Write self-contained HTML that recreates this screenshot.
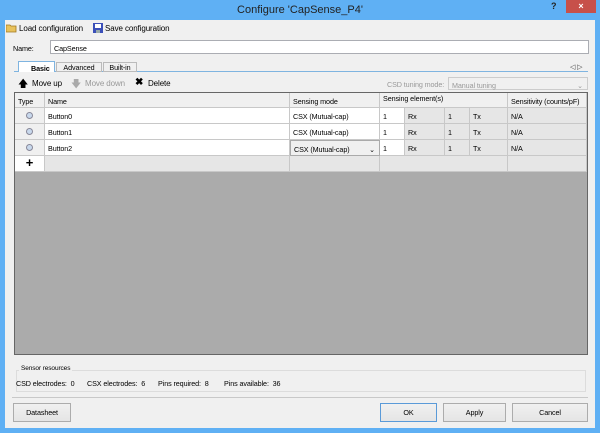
<!DOCTYPE html>
<html><head><style>
*{box-sizing:border-box;margin:0;padding:0}
body{width:600px;height:433px;background:#5fb0f4;font-family:"Liberation Sans",sans-serif;font-size:7.2px;color:#000;position:relative;overflow:hidden;letter-spacing:-0.1px}
.a{position:absolute;white-space:nowrap}
.cl{left:5px;top:20px;width:590px;height:408px;background:#f0f0f0}
.cell{position:absolute;border-right:1px solid #c8c8c8;border-bottom:1px solid #c8c8c8;padding:4px 3px;white-space:nowrap;overflow:hidden}
.btn{position:absolute;border:1px solid #acacac;background:linear-gradient(#f0f0f0,#e5e5e5);text-align:center;line-height:17px}
</style></head><body>
<div class="a" style="left:0;top:0;width:600px;height:20px;text-align:center;font-size:11px;line-height:20px;color:#222;letter-spacing:0">Configure 'CapSense_P4'</div>
<div class="a" style="left:551px;top:1px;font-size:9px;font-weight:bold;color:#222">?</div>
<div class="a" style="left:566px;top:0;width:30px;height:13px;background:#c7504a;color:#fff;text-align:center;font-size:9px;line-height:13px;font-weight:bold">×</div>
<div class="a cl"></div>
<svg class="a" style="left:6px;top:23px" width="12" height="10"><path d="M0 2h4l1 1h5v6H0z" fill="#e8c25c" stroke="#a07820" stroke-width=".8"/></svg>
<div class="a" style="left:19px;top:24px;font-size:8px">Load configuration</div>
<svg class="a" style="left:93px;top:23px" width="10" height="10"><rect x="0" y="0" width="10" height="10" fill="#3b4fb8"/><rect x="2" y="1" width="6" height="4" fill="#fff"/><rect x="3" y="7" width="4" height="3" fill="#9aa"/></svg>
<div class="a" style="left:105px;top:24px;font-size:8px">Save configuration</div>
<div class="a" style="left:13px;top:44px">Name:</div>
<div class="a" style="left:50px;top:40px;width:539px;height:14px;background:#fff;border:1px solid #abadb3;padding:3px 3px">CapSense</div>
<div class="a" style="left:14px;top:71px;width:574px;height:1px;background:#7fb4e0"></div>
<div class="a" style="left:18px;top:61px;width:37px;height:11px;background:#fff;border:1px solid #7fb4e0;border-bottom:none;font-weight:bold;padding:2px 0 0 12px">Basic</div>
<div class="a" style="left:56px;top:62px;width:46px;height:10px;background:#f0f0f0;border:1px solid #bbb;text-align:center;line-height:9px">Advanced</div>
<div class="a" style="left:103px;top:62px;width:34px;height:10px;background:#f0f0f0;border:1px solid #bbb;text-align:center;line-height:9px">Built-in</div>
<div class="a" style="left:570px;top:63px;font-size:7px;color:#444">◁ ▷</div>
<div class="a" style="left:18px;top:77px;font-size:10px">🡅</div>
<div class="a" style="left:32px;top:79px;font-size:8px">Move up</div>
<div class="a" style="left:71px;top:77px;font-size:10px;color:#aaa">🡇</div>
<div class="a" style="left:85px;top:79px;color:#999;font-size:8px">Move down</div>
<div class="a" style="left:135px;top:77px;font-size:10px;font-weight:bold">✖</div>
<div class="a" style="left:148px;top:79px;font-size:8px">Delete</div>
<div class="a" style="left:387px;top:80px;color:#999">CSD tuning mode:</div>
<div class="a" style="left:448px;top:77px;width:140px;height:13px;border:1px solid #ccc;background:#f0f0f0;color:#999;padding:3px 3px">Manual tuning<span style="position:absolute;right:4px">⌄</span></div>
<div class="a" style="left:14px;top:92px;width:574px;height:263px;background:#ababab;border:1px solid #666"></div>
<div class="a" style="left:15px;top:93px;width:572px;height:79px;background:#fff"></div>
<div class="cell" style="left:15px;top:93px;width:30px;height:15px;background:#f0f0f0">Type</div>
<div class="cell" style="left:45px;top:93px;width:245px;height:15px;background:#f0f0f0">Name</div>
<div class="cell" style="left:290px;top:93px;width:90px;height:15px;background:#f0f0f0">Sensing mode</div>
<div class="cell" style="left:380px;top:93px;width:128px;height:15px;background:#f0f0f0;padding-top:1px">Sensing element(s)</div>
<div class="cell" style="left:508px;top:93px;width:79px;height:15px;background:#f0f0f0">Sensitivity (counts/pF)</div>
<div id="rows"></div>
<script>
var h='',tops=[108,124,140];
for(var i=0;i<3;i++){var t=tops[i];
h+='<div class="cell" style="left:15px;top:'+t+'px;width:30px;height:16px;background:#f0f0f0;padding-top:4px"><div style="width:7px;height:7px;border-radius:50%;border:1px solid #889;background:#c8d8ec;margin:0 auto"></div></div>';
h+='<div class="cell" style="left:45px;top:'+t+'px;width:245px;height:16px">Button'+i+'</div>';
h+='<div class="cell" style="left:290px;top:'+t+'px;width:90px;height:16px;'+(i==2?'background:#f0f0f0;border:1px solid #aaa':'')+'">CSX (Mutual-cap)'+(i==2?'<span style="position:absolute;right:4px">⌄</span>':'')+'</div>';
h+='<div class="cell" style="left:380px;top:'+t+'px;width:25px;height:16px">1</div>';
h+='<div class="cell" style="left:405px;top:'+t+'px;width:40px;height:16px;background:#e6e6e6">Rx</div>';
h+='<div class="cell" style="left:445px;top:'+t+'px;width:25px;height:16px;background:#e6e6e6">1</div>';
h+='<div class="cell" style="left:470px;top:'+t+'px;width:38px;height:16px;background:#e6e6e6">Tx</div>';
h+='<div class="cell" style="left:508px;top:'+t+'px;width:79px;height:16px;background:#e6e6e6">N/A</div>';}
h+='<div class="cell" style="left:15px;top:156px;width:30px;height:16px;font-size:13px;font-weight:bold;padding:0;text-align:center;line-height:14px">+</div>';
h+='<div class="cell" style="left:45px;top:156px;width:245px;height:16px;background:#e6e6e6"></div>';
h+='<div class="cell" style="left:290px;top:156px;width:90px;height:16px;background:#e6e6e6"></div>';
h+='<div class="cell" style="left:380px;top:156px;width:128px;height:16px;background:#e6e6e6"></div>';
h+='<div class="cell" style="left:508px;top:156px;width:79px;height:16px;background:#e6e6e6"></div>';
document.getElementById('rows').innerHTML=h;
</script>
<div class="a" style="left:16px;top:370px;width:570px;height:22px;border:1px solid #dcdcdc"></div>
<div class="a" style="left:19px;top:365px;background:#f0f0f0;padding:0 2px;font-size:6.5px">Sensor resources</div>
<div class="a" style="left:16px;top:379px">CSD electrodes:&nbsp; 0</div>
<div class="a" style="left:87px;top:379px">CSX electrodes:&nbsp; 6</div>
<div class="a" style="left:158px;top:379px">Pins required:&nbsp; 8</div>
<div class="a" style="left:224px;top:379px">Pins available:&nbsp; 36</div>
<div class="a" style="left:12px;top:397px;width:576px;height:1px;background:#c8c8c8"></div>
<div class="btn" style="left:13px;top:403px;width:58px;height:19px">Datasheet</div>
<div class="btn" style="left:380px;top:403px;width:57px;height:19px;border-color:#5a9ad8">OK</div>
<div class="btn" style="left:443px;top:403px;width:63px;height:19px">Apply</div>
<div class="btn" style="left:512px;top:403px;width:76px;height:19px">Cancel</div>
</body></html>
